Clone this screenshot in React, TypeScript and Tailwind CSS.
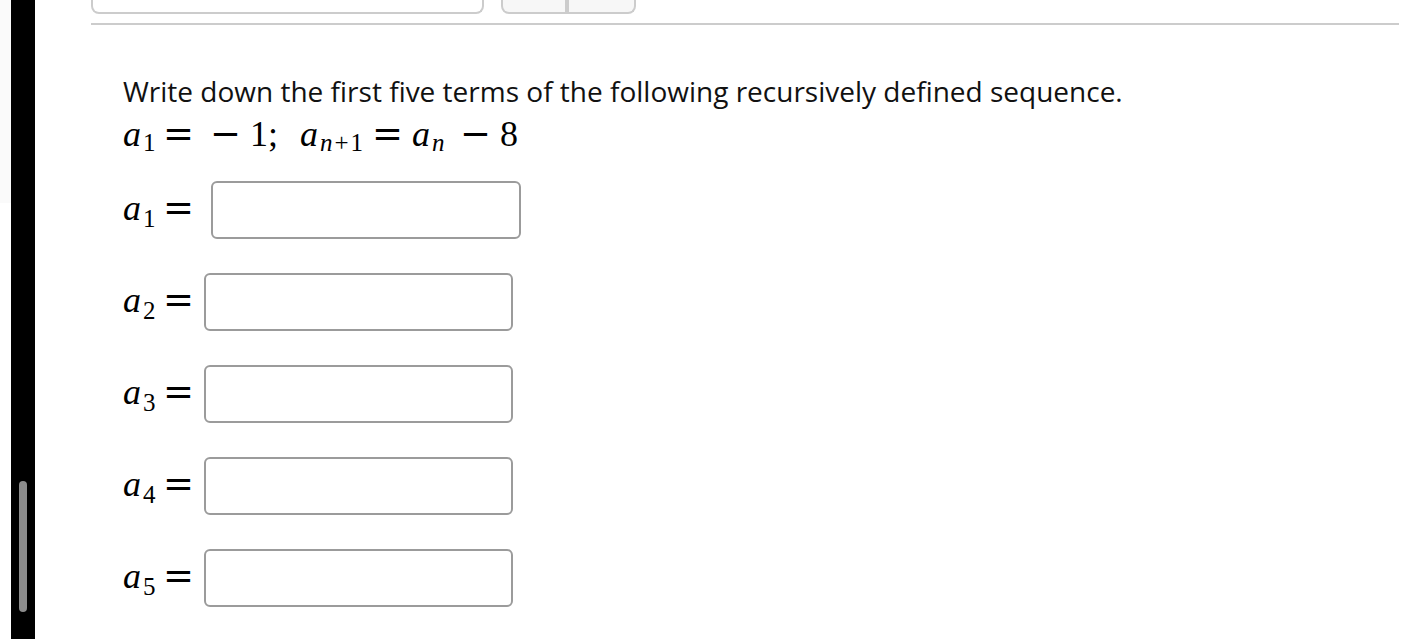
import React from "react";

const serif = "font-['Liberation_Serif',serif]";
const op = "font-['DejaVu_Sans',sans-serif] not-italic text-[37px]";

function Sub({ children, drop }: { children: React.ReactNode; drop: string }) {
  return <span className={`relative ml-[2px] text-[25px] not-italic ${drop}`}>{children}</span>;
}

function A({ sub, drop = "top-[5px]" }: { sub: React.ReactNode; drop?: string }) {
  return (
    <span className="whitespace-nowrap">
      <span className="italic">a</span>
      <Sub drop={drop}>{sub}</Sub>
    </span>
  );
}

function Equation() {
  return (
    <div className={`mt-[2px] flex h-[44px] items-baseline text-[36px] leading-[44px] text-black ${serif}`}>
      <span className="w-[40px]">
        <A sub="1" />
      </span>
      <span className={`w-[47px] ${op}`}>=</span>
      <span className={`w-[40px] ${op}`}>−</span>
      <span className="w-[50px]">1;</span>
      <span className="w-[72px] whitespace-nowrap">
        <span className="italic">a</span>
        <Sub drop="top-[5px]">
          <span className="italic">n</span>
          <span className="mx-[2px]">+</span>1
        </Sub>
      </span>
      <span className={`w-[40px] ${op}`}>=</span>
      <span className="w-[48px]">
        <A sub={<span className="italic">n</span>} />
      </span>
      <span className={`w-[40px] ${op}`}>−</span>
      <span>8</span>
    </div>
  );
}

function TermRow({ n, first }: { n: number; first?: boolean }) {
  return (
    <div className="flex h-[58px] items-start">
      <div className={`flex items-baseline pt-[5px] text-[36px] leading-[44px] text-black ${serif}`}>
        <span className="w-[40px]">
          <A sub={String(n)} drop="top-[7px]" />
        </span>
        <span className={`${first ? "w-[48px]" : "w-[41px]"} ${op}`}>=</span>
      </div>
      <input
        type="text"
        className={`h-[58px] ${first ? "w-[310px]" : "w-[309px]"} rounded-[6px] border-2 border-[#9b9b9b] bg-white outline-none`}
      />
    </div>
  );
}

export default function App() {
  return (
    <div className="flex h-[639px] w-[1423px] overflow-hidden bg-white">
      <div className="flex w-[11px] flex-col">
        <div className="h-[203px] bg-[#fafafa]" />
        <div className="flex-1 bg-white" />
      </div>
      <div className="relative w-[24px] bg-black">
        <div className="absolute left-[8px] top-[481px] h-[131px] w-[8px] rounded-full bg-[#8c8c8c]" />
      </div>

      <div className="flex-1 pl-[56px]">
        <div className="flex items-start gap-[17px]">
          <div className="h-[14px] w-[393px] rounded-b-[8px] border-2 border-t-0 border-[#cccccc] bg-white" />
          <div className="flex h-[14px] w-[135px] rounded-b-[8px] border-2 border-t-0 border-[#cccccc] bg-[#f7f7f7]">
            <div className="w-[66px] border-r-[4px] border-[#cccccc]" />
            <div className="flex-1" />
          </div>
        </div>
        <div className="mt-[9px] h-[2px] w-[1308px] bg-[#cccccc]" />

        <div className="pl-[32px]">
          <p className="mt-[48px] h-[37px] font-['Open_Sans',sans-serif] text-[28px] leading-[37px] text-[#111]">
            Write down the first five terms of the following recursively defined sequence.
          </p>
          <Equation />

          <div className="mt-[25px] flex flex-col gap-[34px]">
            <TermRow n={1} first />
            <TermRow n={2} />
            <TermRow n={3} />
            <TermRow n={4} />
            <TermRow n={5} />
          </div>
        </div>
      </div>
    </div>
  );
}
